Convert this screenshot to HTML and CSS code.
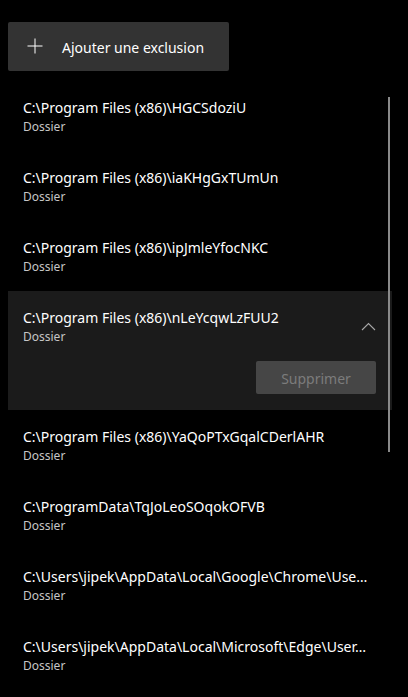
FILE: index.html
```html
<!DOCTYPE html>
<html lang="fr">
<head>
<meta charset="utf-8">
<link rel="stylesheet" href="styles.css">
</head>
<body>
<div class="page">
  <button class="add-btn">
    <svg class="plus" width="16" height="16" viewBox="0 0 16 16"><path d="M8 0.5V15.5M0.5 8H15.5" stroke="#fff" stroke-width="1" fill="none"/></svg>
    <span>Ajouter une exclusion</span>
  </button>
  <div class="list">
    <div class="item"><div class="texts"><div class="title">C:\Program Files (x86)\HGCSdoziU</div><div class="sub">Dossier</div></div></div>
    <div class="item"><div class="texts"><div class="title">C:\Program Files (x86)\iaKHgGxTUmUn</div><div class="sub">Dossier</div></div></div>
    <div class="item"><div class="texts"><div class="title">C:\Program Files (x86)\ipJmleYfocNKC</div><div class="sub">Dossier</div></div></div>
    <div class="item expanded">
      <div class="row">
        <div class="texts"><div class="title">C:\Program Files (x86)\nLeYcqwLzFUU2</div><div class="sub">Dossier</div></div>
        <svg class="chev" width="15" height="10" viewBox="0 0 15 10"><path d="M1 9L7.5 2.5L14 9" stroke="#a8a8a8" stroke-width="1.1" fill="none"/></svg>
      </div>
      <div class="actions"><button class="del-btn">Supprimer</button></div>
    </div>
    <div class="item"><div class="texts"><div class="title">C:\Program Files (x86)\YaQoPTxGqalCDerlAHR</div><div class="sub">Dossier</div></div></div>
    <div class="item"><div class="texts"><div class="title">C:\ProgramData\TqJoLeoSOqokOFVB</div><div class="sub">Dossier</div></div></div>
    <div class="item"><div class="texts"><div class="title">C:\Users\jipek\AppData\Local\Google\Chrome\Use…</div><div class="sub">Dossier</div></div></div>
    <div class="item"><div class="texts"><div class="title">C:\Users\jipek\AppData\Local\Microsoft\Edge\User…</div><div class="sub">Dossier</div></div></div>
    <div class="scrollbar"></div>
  </div>
</div>
</body>
</html>
```
FILE: styles.css
```css
html, body {
  margin: 0;
  padding: 0;
  background: #000;
  height: 100%;
  overflow: hidden;
}
body {
  font-family: "Noto Sans", "Open Sans", sans-serif;
  color: #fff;
}
.page {
  padding: 22px 16px 0 8px;
}
.add-btn {
  display: flex;
  align-items: center;
  width: 221px;
  height: 49px;
  background: #333;
  border: none;
  border-radius: 2px;
  padding: 2px 0 0 19px;
  color: #fff;
  font-family: inherit;
  font-size: 14px;
  cursor: pointer;
}
.add-btn .plus {
  flex: none;
  margin-right: 19px;
  margin-top: -4px;
}
.list {
  position: relative;
  margin-top: 10px;
  width: 384px;
}
.item {
  height: 70px;
  box-sizing: border-box;
  padding: 17px 14px 0 15px;
}
.texts {
  min-width: 0;
  flex: 1;
}
.title {
  font-size: 14px;
  line-height: 20px;
  white-space: nowrap;
  color: #fff;
}
.sub {
  font-size: 12px;
  line-height: 16px;
  color: #c6c6c6;
  margin-top: 1px;
}
.item.expanded {
  height: 119px;
  background: #1b1b1b;
  padding-right: 16px;
}
.row {
  display: flex;
  align-items: flex-start;
}
.chev {
  flex: none;
  margin: 13px 0 0 12px;
}
.actions {
  display: flex;
  justify-content: flex-end;
  margin-top: 16px;
}
.del-btn {
  width: 120px;
  height: 33px;
  border: none;
  border-radius: 2px;
  background: #464646;
  color: #7c7c7c;
  font-family: inherit;
  font-size: 14px;
  padding: 1px 0 0;
}
.scrollbar {
  position: absolute;
  left: 380px;
  top: 16px;
  width: 2px;
  height: 355px;
  background: #8a8a8a;
}
```
